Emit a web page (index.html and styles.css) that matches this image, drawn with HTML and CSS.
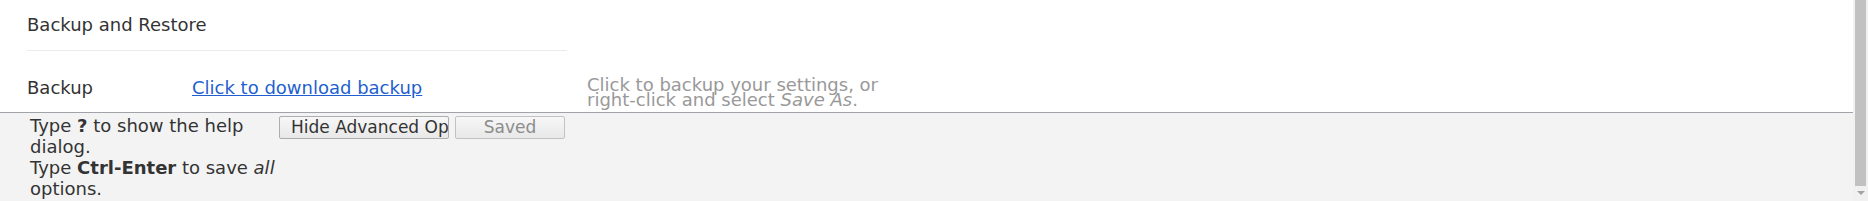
FILE: index.html
```html
<!DOCTYPE html>
<html lang="en">
<head>
    <meta charset="UTF-8">
    <title>Options</title>
    <link rel="stylesheet" href="styles.css">
</head>
<body>
    <div class="page">
        <div class="content">
            <h2 class="section-title">Backup and Restore</h2>
            <div class="divider"></div>
            <div class="option-row">
                <div class="option-label">Backup</div>
                <div class="option-value"><a href="#">Click to download backup</a></div>
                <div class="example">Click to backup your settings, or right-click and select <i>Save As</i>.</div>
            </div>
        </div>

        <div class="footer">
            <div class="help-text">
                Type <b>?</b> to show the help dialog.<br>
                Type <b>Ctrl-Enter</b> to save <i>all</i> options.
            </div>
            <div class="buttons">
                <button class="btn btn-advanced">Hide Advanced Options</button>
                <button class="btn btn-save" disabled>Saved</button>
            </div>
        </div>
    </div>

    <div class="scrollbar">
        <div class="scroll-thumb"></div>
        <div class="scroll-arrow"></div>
    </div>
</body>
</html>
```

FILE: styles.css
```css
* {
    box-sizing: border-box;
}

html, body {
    margin: 0;
    height: 201px;
    overflow: hidden;
}

body {
    display: flex;
    font-family: "DejaVu Sans", sans-serif;
    font-size: 18px;
    color: #333;
    background: #fff;
}

.page {
    flex: 1;
    display: flex;
    flex-direction: column;
}

.content {
    height: 112px;
    padding-left: 27px;
    background: #fff;
}

.section-title {
    margin: 0;
    padding-top: 14px;
    font-size: 18px;
    font-weight: normal;
    line-height: 21px;
}

.divider {
    width: 540px;
    margin-top: 15px;
    border-top: 1px solid #ebebeb;
}

.option-row {
    display: grid;
    grid-template-columns: 165px 395px 300px;
    margin-top: 26px;
    line-height: 21px;
}

.option-value a {
    color: #1f5fd0;
}

.example {
    color: #999;
    line-height: 15px;
}

.footer {
    flex: 1;
    display: flex;
    padding: 2px 0 0 30px;
    border-top: 1px solid #a0a4a9;
    background: #f3f3f3;
}

.help-text {
    width: 249px;
    line-height: 21px;
}

.buttons {
    display: flex;
    gap: 6px;
    margin-top: 1px;
    align-items: flex-start;
}

.btn {
    height: 23px;
    margin: 0;
    padding: 0 0 0 11px;
    font-family: "DejaVu Sans", sans-serif;
    font-size: 17px;
    line-height: 21px;
    color: #333;
    border: 1px solid #adadad;
    border-radius: 2px;
    background: linear-gradient(#f7f7f7, #e8e8e8);
    white-space: nowrap;
    overflow: hidden;
}

.btn-advanced {
    width: 170px;
    text-align: left;
}

.btn-save {
    width: 110px;
    padding: 0;
    text-align: center;
    color: #8c8c8c;
    border-color: #c2c2c2;
}

.scrollbar {
    width: 15px;
    display: flex;
    flex-direction: column;
    align-items: center;
    background: #f1f1f1;
}

.scroll-thumb {
    width: 11px;
    height: 186px;
    background: #c1c1c1;
}

.scroll-arrow {
    margin-top: 5px;
    border-left: 4px solid transparent;
    border-right: 4px solid transparent;
    border-top: 4px solid #a3a3a3;
}
```
